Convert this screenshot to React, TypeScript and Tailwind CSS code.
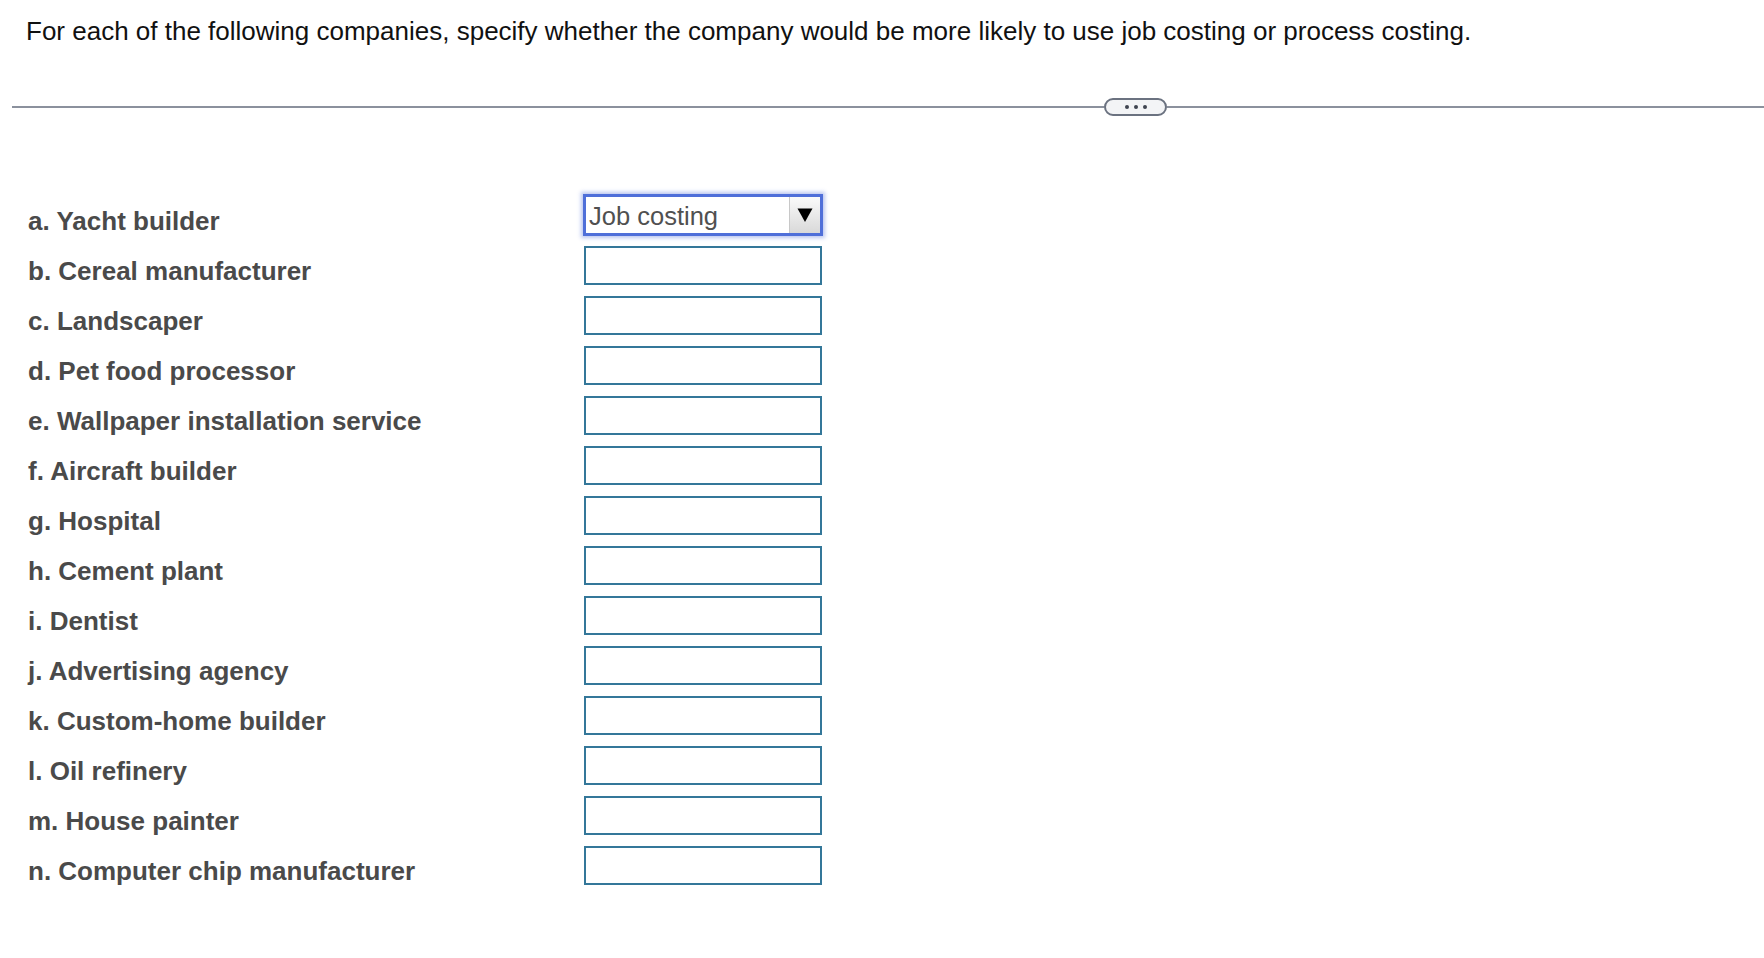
const companies = [
  "a. Yacht builder",
  "b. Cereal manufacturer",
  "c. Landscaper",
  "d. Pet food processor",
  "e. Wallpaper installation service",
  "f. Aircraft builder",
  "g. Hospital",
  "h. Cement plant",
  "i. Dentist",
  "j. Advertising agency",
  "k. Custom-home builder",
  "l. Oil refinery",
  "m. House painter",
  "n. Computer chip manufacturer",
];

function Dropdown() {
  return (
    <div className="flex w-[240px] h-[42px] border-[3px] border-[#4f6fd9] bg-white shadow-[0_0_4px_2px_rgba(79,111,217,0.4)]">
      <span className="flex-1 pl-[3px] text-[25.5px] leading-[38px] text-[#505050]">Job costing</span>
      <span className="flex w-[31px] items-center justify-center border-l border-[#c8c8c8] bg-gradient-to-b from-[#fafafa] to-[#d9d9d9]">
        <svg width="16" height="16" viewBox="0 0 16 16">
          <polygon points="0.5,1.5 15.5,1.5 8,15" fill="#000" />
        </svg>
      </span>
    </div>
  );
}

export default function App() {
  return (
    <main className="min-h-[958px] bg-white font-['Liberation_Sans',Arial,sans-serif]">
      <p className="pt-[16px] pl-[26px] text-[26px] leading-[30px] text-[#111]">
        For each of the following companies, specify whether the company would be more likely to use job costing or process costing.
      </p>

      <div className="mt-[52px] ml-[12px] flex h-[18px] items-center">
        <div className="h-[2px] w-[1092px] bg-[#8b919d]" />
        <div className="flex h-[18px] w-[63px] items-center justify-center gap-[5px] rounded-full border-2 border-[#6b7280] bg-[#f3f4f6]">
          <span className="h-[4px] w-[4px] rounded-full bg-[#3f4450]" />
          <span className="h-[4px] w-[4px] rounded-full bg-[#3f4450]" />
          <span className="h-[4px] w-[4px] rounded-full bg-[#3f4450]" />
        </div>
        <div className="h-[2px] flex-1 bg-[#8b919d]" />
      </div>

      <div className="mt-[74px] flex flex-col">
        {companies.map((name, i) => (
          <div key={name} className="flex h-[50px] items-center">
            <span className="w-[583px] shrink-0 pl-[28px] pt-[12px] text-[26px] font-bold leading-[30px] text-[#4a4a4a]">
              {name}
            </span>
            {i === 0 ? (
              <Dropdown />
            ) : (
              <div className="ml-[1px] h-[39px] w-[238px] border-2 border-[#347799] bg-white" />
            )}
          </div>
        ))}
      </div>
    </main>
  );
}
